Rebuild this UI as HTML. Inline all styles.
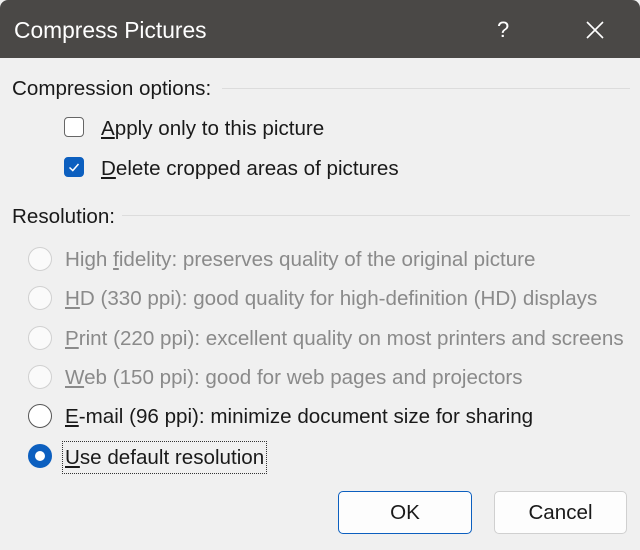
<!DOCTYPE html>
<html><head><style>
body{margin:0;width:640px;height:550px;background:#f0f0f0;font-family:"Liberation Sans",sans-serif;font-size:20.6px;color:#1a1a1a;position:relative;overflow:hidden}
.t{position:absolute;white-space:nowrap;line-height:24px}
.title{position:absolute;left:0;top:0;width:640px;height:58px;background:#4a4846;color:#fff;border-radius:8px 8px 0 0}
.line{position:absolute;height:1px;background:#dcdcdc}
.cb{position:absolute;width:20px;height:20px;border:1.5px solid #666;border-radius:4px;background:#fff;box-sizing:border-box}
.cb.on{background:#0c5fbf;border-color:#0c5fbf}
.r{position:absolute;width:24px;height:24px;border-radius:50%;border:1.5px solid #d0d0d0;background:#fafafa;box-sizing:border-box}
.r.en{border-color:#555;background:#fff}
.r.sel{border:7px solid #0c5fbf;background:#fff}
.d{color:#8a8a8a}
u{text-decoration:underline;text-underline-offset:2px}
.btn{position:absolute;top:491px;height:43px;border:1px solid #d0d0d0;border-radius:5px;background:#fdfdfd;box-sizing:border-box;text-align:center;line-height:41px}
</style></head><body>
<div class="title">
<div class="t" style="left:14px;top:18px;font-size:22.8px">Compress Pictures</div>
<div class="t" style="left:497px;top:18px;font-size:22px">?</div>
<svg style="position:absolute;left:585px;top:20px" width="20" height="20"><path d="M2 2L18 18M18 2L2 18" stroke="#fff" stroke-width="1.6"/></svg>
</div>
<div class="t" style="left:12px;top:77px">Compression options:</div>
<div class="line" style="left:222px;right:10px;top:88px"></div>
<div class="cb" style="left:64px;top:117px"></div>
<div class="t" style="left:101px;top:117px"><u>A</u>pply only to this picture</div>
<div class="cb on" style="left:64px;top:157px"><svg width="20" height="20" style="position:absolute;left:-1.5px;top:-1.5px"><path d="M5.5 10.5L8.8 13.5L14.5 7" stroke="#fff" stroke-width="1.5" fill="none"/></svg></div>
<div class="t" style="left:101px;top:157px"><u>D</u>elete cropped areas of pictures</div>
<div class="t" style="left:12px;top:205px">Resolution:</div>
<div class="line" style="left:122px;right:10px;top:215px"></div>
<div class="r" style="left:28px;top:247px"></div>
<div class="t d" style="left:65px;top:248px">High <u>f</u>idelity: preserves quality of the original picture</div>
<div class="r" style="left:28px;top:286px"></div>
<div class="t d" style="left:65px;top:287px"><u>H</u>D (330 ppi): good quality for high-definition (HD) displays</div>
<div class="r" style="left:28px;top:326px"></div>
<div class="t d" style="left:65px;top:327px"><u>P</u>rint (220 ppi): excellent quality on most printers and screens</div>
<div class="r" style="left:28px;top:365px"></div>
<div class="t d" style="left:65px;top:366px"><u>W</u>eb (150 ppi): good for web pages and projectors</div>
<div class="r en" style="left:28px;top:404px"></div>
<div class="t" style="left:65px;top:405px"><u>E</u>-mail (96 ppi): minimize document size for sharing</div>
<div class="r sel" style="left:28px;top:444px"></div>
<div class="t" style="left:62px;top:441px;border:1px dotted #333;padding:2px 2px;line-height:27px"><u>U</u>se default resolution</div>
<div class="btn" style="left:338px;width:134px;border:1.5px solid #0c5fbf">OK</div>
<div class="btn" style="left:494px;width:133px">Cancel</div>
</body></html>
